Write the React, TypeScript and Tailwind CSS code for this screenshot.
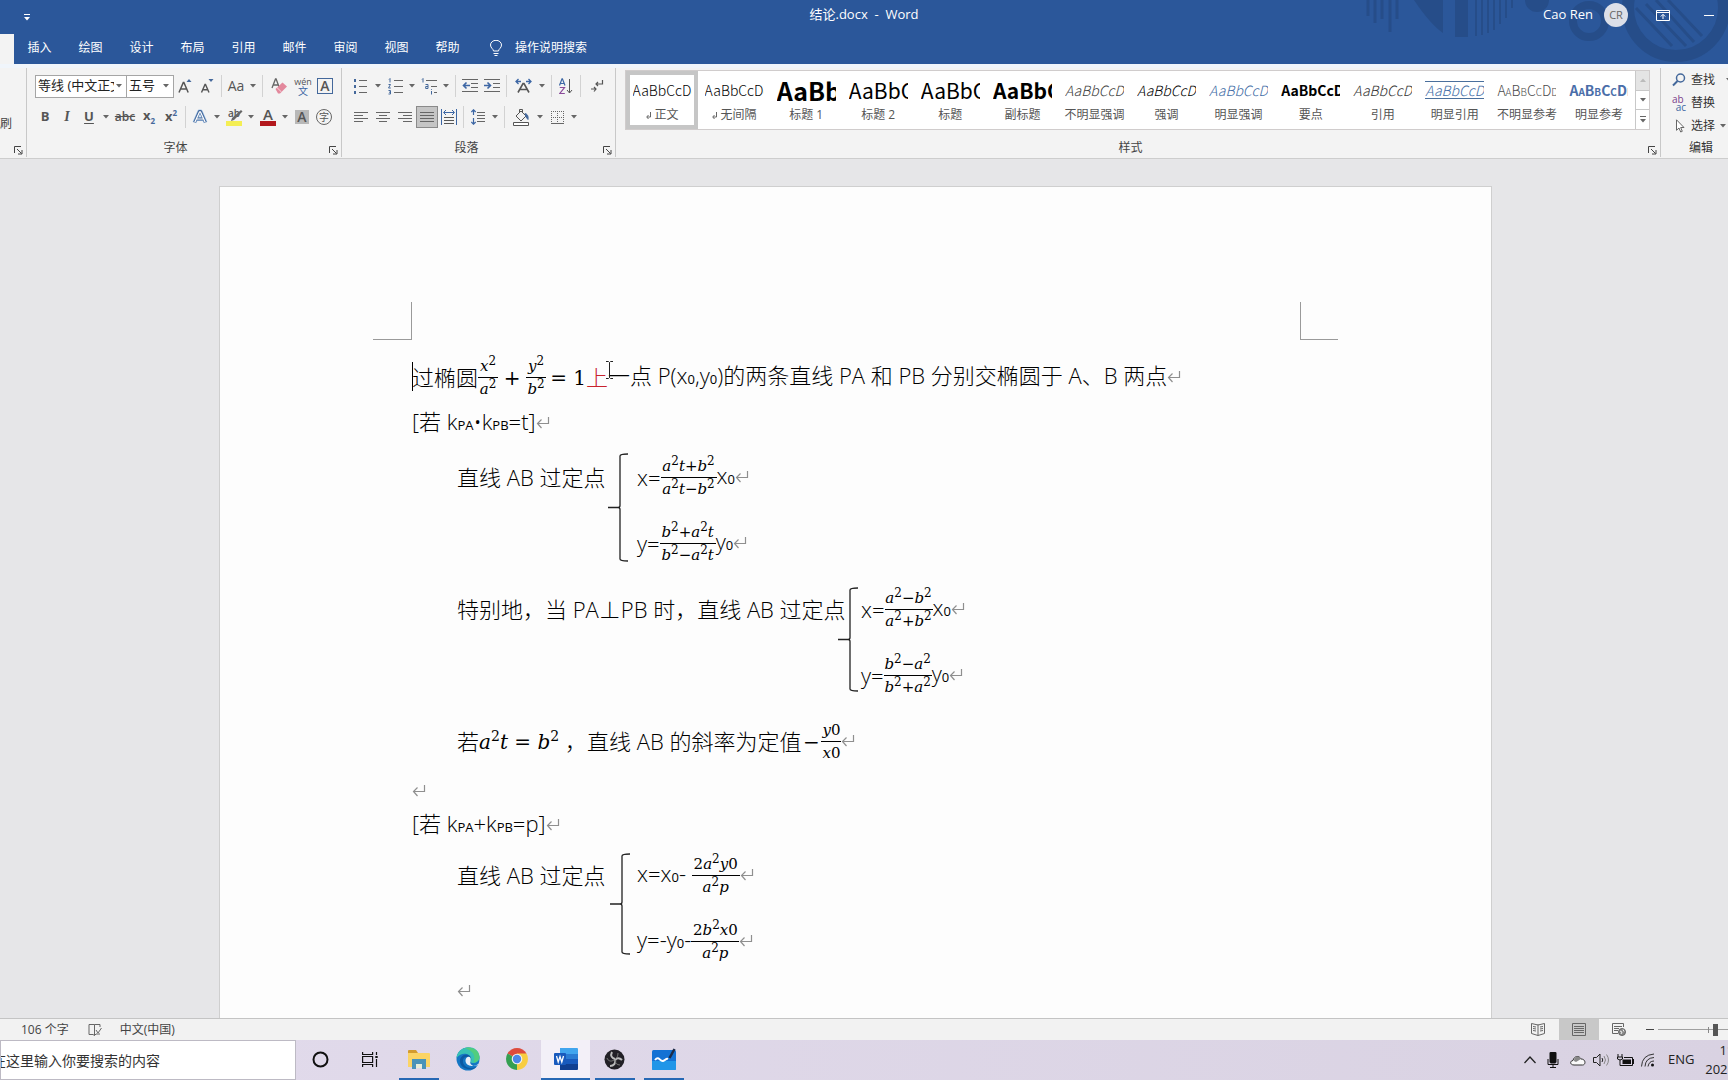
import type { ReactNode } from "react";

const TABS = ["插入", "绘图", "设计", "布局", "引用", "邮件", "审阅", "视图", "帮助"];

const STYLES = [
  { name: "正文", mark: true, cls: "text-sm font-light text-black" },
  { name: "无间隔", mark: true, cls: "text-sm font-light text-black" },
  { name: "标题 1", cls: "text-[25px] font-bold text-black" },
  { name: "标题 2", cls: "text-[21px] text-black" },
  { name: "标题", cls: "text-[21px] text-black" },
  { name: "副标题", cls: "text-[21px] font-bold text-black" },
  { name: "不明显强调", cls: "text-sm font-light italic text-[#404040]" },
  { name: "强调", cls: "text-sm font-light italic text-black" },
  { name: "明显强调", cls: "text-sm font-light italic text-[#3f6da6]" },
  { name: "要点", cls: "text-sm font-bold text-black" },
  { name: "引用", cls: "text-sm font-light italic text-[#333]" },
  { name: "明显引用", cls: "text-sm font-light italic text-[#3f6da6] border-y border-[#4a6f9c]" },
  { name: "不明显参考", cls: "text-sm font-light [font-variant:small-caps] text-[#4a4a4a]" },
  { name: "明显参考", cls: "text-sm font-bold [font-variant:small-caps] text-[#4a6ea9]" },
];

// ================================
// RIBBON PARTS
// ================================
function Tool({ label, active, wide, children }: { label: string; active?: boolean; wide?: boolean; children: ReactNode }) {
  return (
    <button
      aria-label={label}
      className={`flex h-[22px] shrink-0 items-center justify-center text-[#555] ${wide ? "w-[26px]" : "w-[22px]"} ${
        active ? "border border-[#8a8a8a] bg-[#c5c5c5]" : ""
      }`}
    >
      {children}
    </button>
  );
}

function Arrow({ label = "更多" }: { label?: string }) {
  return (
    <button aria-label={label} className="flex h-[22px] w-3 shrink-0 items-center justify-center">
      <Caret />
    </button>
  );
}

function Caret({ color = "#666" }: { color?: string }) {
  return (
    <svg width="6" height="4" viewBox="0 0 6 4" aria-hidden="true">
      <path d="M0 0h6L3 3.6z" fill={color} />
    </svg>
  );
}

function Sep() {
  return <div className="mx-[3px] h-[22px] w-px shrink-0 bg-[#d2d2d2]" />;
}

function Launcher({ label }: { label: string }) {
  return (
    <button aria-label={label} className="flex h-4 w-4 shrink-0 items-center justify-center pt-1">
      <svg width="9" height="9" viewBox="0 0 9 9" fill="none" stroke="#444">
        <path d="M.5 7V.5H7M3 3l4.5 4.5M8 4v4H4" />
      </svg>
    </button>
  );
}

function GroupLabel({ text }: { text: string }) {
  return (
    <div className="mt-auto flex h-[18px] items-center">
      <span className="flex-1 pr-2 text-center">{text}</span>
      <Launcher label={`${text}设置`} />
    </div>
  );
}

function Combo({ label, value, cls }: { label: string; value: string; cls: string }) {
  return (
    <div className={`relative h-[23px] shrink-0 border border-[#a5a5a5] bg-white ${cls}`}>
      <select aria-label={label} className="h-full w-full appearance-none overflow-hidden bg-transparent pr-3 pl-[2px] text-[13px] text-[#222]">
        <option>{value}</option>
      </select>
      <span className="pointer-events-none absolute top-0 right-1 flex h-full items-center">
        <Caret />
      </span>
    </div>
  );
}

function Lines({ d }: { d: string }) {
  return (
    <svg width="14" height="14" viewBox="0 0 14 14" stroke="#666" fill="none">
      <path d={d} />
    </svg>
  );
}

function FontGroup() {
  return (
    <div className="flex w-[315px] shrink-0 flex-col border-r border-[#c8c8c8] pt-[7px] pl-[7px]">
      <div className="flex h-[22px] items-center pl-px">
        <Combo label="字体" value="等线 (中文正文)" cls="w-[92px]" />
        <Combo label="字号" value="五号" cls="-ml-px w-[48px]" />
        <Tool label="增大字号">
          <svg width="16" height="16" viewBox="0 0 16 16" fill="none">
            <path d="M2 14.500 6.300 4.500h.6L11.200 14.500M3.600 11h6" stroke="#555" strokeWidth="1.500" />
            <path d="M9.500 4 12 1l2.500 3z" fill="#44689b" />
          </svg>
        </Tool>
        <Tool label="减小字号">
          <svg width="16" height="16" viewBox="0 0 16 16" fill="none">
            <path d="M2.500 14.500 6 6.500h.5L10 14.500M3.800 11.800h5" stroke="#555" strokeWidth="1.400" />
            <path d="M9.500 1h5L12 4z" fill="#44689b" />
          </svg>
        </Tool>
        <Sep />
        <Tool label="更改大小写">
          <span className="text-sm">Aa</span>
        </Tool>
        <Arrow />
        <Sep />
        <Tool label="清除所有格式" wide>
          <svg width="18" height="18" viewBox="0 0 18 18" fill="none">
            <path d="M2 11 5.500 2h.6l3 8M3.400 8h5" stroke="#666" strokeWidth="1.300" />
            <path d="m5.500 12 7-6.500 4.500 4-7 7H8z" fill="#e3889c" />
            <path d="m7 10.600 4.500 4.400" stroke="#f6dbe1" />
          </svg>
        </Tool>
        <Tool label="拼音指南">
          <span className="flex flex-col items-center leading-none">
            <span className="text-[9px] leading-[9px]">wén</span>
            <span className="text-[10px] leading-[10px] text-[#3c66a4]">文</span>
          </span>
        </Tool>
        <Tool label="字符边框">
          <span className="flex h-4 w-4 items-center justify-center border border-[#44689b] text-[14px] leading-none font-semibold">A</span>
        </Tool>
      </div>
      <div className="mt-[9px] flex h-[22px] items-center">
        <Tool label="加粗"><b className="text-[13px]">B</b></Tool>
        <Tool label="倾斜"><i className="font-['Liberation_Serif',serif] text-sm font-bold">I</i></Tool>
        <Tool label="下划线"><span className="text-[13px] font-bold underline underline-offset-2">U</span></Tool>
        <Arrow />
        <Tool label="删除线" wide><span className="text-xs font-semibold line-through">abc</span></Tool>
        <Tool label="下标"><span className="text-[13px] font-bold">x<span className="align-sub text-[8px] text-[#44689b]">2</span></span></Tool>
        <Tool label="上标"><span className="text-[13px] font-bold">x<span className="align-super text-[8px] text-[#44689b]">2</span></span></Tool>
        <Sep />
        <Tool label="文本效果">
          <svg width="16" height="16" viewBox="0 0 16 16" fill="none" strokeLinejoin="round">
            <path d="M2.500 13.500 7.300 2.500h1.400l4.800 11M4.500 10h7" stroke="#a9c8ea" strokeWidth="4" />
            <path d="M2.500 13.500 7.300 2.500h1.400l4.800 11M4.500 10h7" stroke="#44689b" strokeWidth="2.800" />
            <path d="M2.700 13.500 7.600 2.800h.8l4.900 10.700M4.500 10h7" stroke="#fff" strokeWidth="1.200" />
          </svg>
        </Tool>
        <Arrow />
        <Tool label="突出显示">
          <span className="relative flex h-[18px] w-4 flex-col">
            <span className="text-[10px] leading-[10px] font-semibold">ab</span>
            <svg className="absolute top-0 left-0" width="17" height="13" viewBox="0 0 17 13">
              <path d="m15 2 1.500 1.500L8 12l-3 1 1-3z" fill="#666" />
            </svg>
            <span className="mt-auto h-[5px] w-full bg-[#f4ee54]" />
          </span>
        </Tool>
        <Arrow />
        <Tool label="字体颜色">
          <span className="flex h-[18px] w-4 flex-col items-center">
            <span className="text-[15px] leading-[13px] font-semibold">A</span>
            <span className="mt-auto h-[5px] w-full bg-[#b3181d]" />
          </span>
        </Tool>
        <Arrow />
        <Tool label="字符底纹">
          <span className="flex h-[14px] w-[14px] items-center justify-center bg-[#b8b8b8] text-sm leading-none font-semibold">A</span>
        </Tool>
        <Tool label="带圈字符">
          <span className="flex h-4 w-4 items-center justify-center rounded-full border border-[#666] text-[10px] leading-none">字</span>
        </Tool>
      </div>
      <GroupLabel text="字体" />
    </div>
  );
}

function ParagraphGroup() {
  return (
    <div className="flex w-[274px] shrink-0 flex-col border-r border-[#c8c8c8] pt-[7px]">
      <div className="flex h-[22px] items-center pl-2">
        <Tool label="项目符号">
          <svg width="14" height="16" viewBox="0 0 14 16">
            <path d="M0 1h2v3H0zM0 7h2v3H0zM0 13h2v3H0z" fill="#44689b" />
            <path d="M5 2.500h8M5 8.500h8M5 14.500h8" stroke="#666" />
          </svg>
        </Tool>
        <Arrow />
        <Tool label="编号">
          <svg width="15" height="17" viewBox="0 0 15 17" fill="none">
            <path d="M1 1.500 2 .5v4M.5 6.500h2L.5 10h2.300M.5 12.500h2v3.500h-2M1 14.200h1.500" stroke="#44689b" />
            <path d="M6 2.500h9M6 8.500h9M6 14.500h9" stroke="#666" />
          </svg>
        </Tool>
        <Arrow />
        <Tool label="多级列表">
          <svg width="17" height="17" viewBox="0 0 17 17" fill="none">
            <path d="M1 1.500 2 .5v4M4.500 6.500h2.500v4h-2.300v-2H7M10.500 11v.8M10.500 13v3.500" stroke="#44689b" />
            <path d="M5 2.500h11M10 8.500h6M13 14.500h3" stroke="#666" />
          </svg>
        </Tool>
        <Arrow />
        <Sep />
        <Tool label="减少缩进">
          <svg width="16" height="14" viewBox="0 0 16 14" fill="none">
            <path d="M0 .5h16M9 4.500h7M9 8.500h7M0 12.500h16" stroke="#666" />
            <path d="M8 6.500H2M4.500 3.500l-3 3 3 3" stroke="#3c66a4" strokeWidth="1.600" />
          </svg>
        </Tool>
        <Tool label="增加缩进">
          <svg width="16" height="14" viewBox="0 0 16 14" fill="none">
            <path d="M0 .5h16M9 4.500h7M9 8.500h7M0 12.500h16" stroke="#666" />
            <path d="M0 6.500h6M3.500 3.500l3 3-3 3" stroke="#3c66a4" strokeWidth="1.600" />
          </svg>
        </Tool>
        <Sep />
        <Tool label="中文版式" wide>
          <svg width="17" height="16" viewBox="0 0 17 16" fill="none">
            <path d="m3 14.500 5-9h1l5 9M5 11.500h7" stroke="#555" strokeWidth="1.600" />
            <path d="M1 3.500h5M3.500 1 1 3.500 3.500 6M16 3.500h-5M13.500 1 16 3.500 13.500 6" stroke="#3c66a4" strokeWidth="1.300" />
          </svg>
        </Tool>
        <Arrow />
        <Sep />
        <Tool label="排序">
          <svg width="14" height="17" viewBox="0 0 14 17" fill="none">
            <path d="M.5 7.500 3 .8h.4L6 7.500M1.500 5.500h3.500" stroke="#3c66a4" strokeWidth="1.200" />
            <path d="M.8 9.500h4.700L.8 15.500h5" stroke="#8a4a9a" strokeWidth="1.200" />
            <path d="M10.500 1v14M8 12l2.500 3 2.500-3" stroke="#555" />
          </svg>
        </Tool>
        <Sep />
        <Tool label="显示编辑标记" wide>
          <svg width="13" height="13" viewBox="0 0 13 13" fill="none" stroke="#555" strokeWidth="1.200">
            <path d="M11.500 0v4H5M7 2 5 4l2 2M0 9h5M3 7l2 2-2 2.500" />
          </svg>
        </Tool>
      </div>
      <div className="mt-[9px] flex h-[22px] items-center pl-2">
        <Tool label="左对齐"><Lines d="M0 2.500h14M0 5.500h9M0 8.500h14M0 11.500h9" /></Tool>
        <Tool label="居中"><Lines d="M0 2.500h14M3 5.500h8M0 8.500h14M3 11.500h8" /></Tool>
        <Tool label="右对齐"><Lines d="M0 2.500h14M5 5.500h9M0 8.500h14M5 11.500h9" /></Tool>
        <Tool label="两端对齐" active><Lines d="M0 2.500h14M0 5.500h14M0 8.500h14M0 11.500h14" /></Tool>
        <Tool label="分散对齐">
          <svg width="16" height="16" viewBox="0 0 16 16" fill="none">
            <path d="M.5 0v16M15.500 0v16M3 3.500h10M5 1 2.500 3.500 5 6M11 1l2.500 2.500L11 6" stroke="#3c66a4" />
            <path d="M3 8.500h10M3 11.500h10M3 14.500h10" stroke="#555" />
          </svg>
        </Tool>
        <Sep />
        <Tool label="行距">
          <svg width="14" height="16" viewBox="0 0 14 16" fill="none">
            <path d="M2.500 1v5M.3 3 2.500.8 4.700 3M2.500 9v6M.3 13l2.200 2.200L4.700 13" stroke="#3c66a4" strokeWidth="1.200" />
            <path d="M6 3.500h8M6 6.500h8M6 9.500h8M6 12.500h8" stroke="#666" />
          </svg>
        </Tool>
        <Arrow />
        <Sep />
        <Tool label="底纹" wide>
          <svg width="17" height="17" viewBox="0 0 17 17" fill="none" stroke="#555">
            <path d="m3 7 5-5 5 5-5 5zM6.500 3.500V.5h3V4" />
            <path d="M12 4.500c2 .5 3.500 2 3 6l-2-2.500z" fill="#44689b" stroke="#44689b" />
            <path d="M.5 13.500h15v3H.5z" fill="#fff" />
          </svg>
        </Tool>
        <Arrow />
        <Tool label="边框">
          <svg width="13" height="13" viewBox="0 0 13 13" fill="none" stroke="#666">
            <path d="M0 .5h13M0 6.500h13M.5 0v13M6.500 0v13M12.500 0v13" strokeDasharray="1 1" />
            <path d="M0 12.500h13" />
          </svg>
        </Tool>
        <Arrow />
      </div>
      <GroupLabel text="段落" />
    </div>
  );
}

function StylesGroup() {
  return (
    <div className="flex min-w-0 flex-1 flex-col border-r border-[#c8c8c8] pt-[2px] pl-[9px]">
      <div className="mr-[10px] flex h-[60px] border border-[#d0cccc] bg-white">
        <div className="grid min-w-0 flex-1 grid-cols-14">
          {STYLES.map((s, i) => (
            <button
              key={s.name}
              className={`flex min-w-0 flex-col items-center ${i === 0 ? "outline-4 -outline-offset-4 outline-[#c6c6c6]" : ""}`}
            >
              <span className="flex h-[34px] w-[59px] items-center overflow-hidden pt-1">
                <span className={`font-['Noto_Sans_CJK_SC',sans-serif] leading-[16px] ${s.cls}`}>AaBbCcDd</span>
              </span>
              <span className="flex items-center gap-1 leading-5 whitespace-nowrap text-[#555]">
                {s.mark && (
                  <svg width="5" height="7" viewBox="0 0 5 7" fill="none" stroke="#666">
                    <path d="M4.500 0v5H1M2.500 3 .7 5l1.800 2" />
                  </svg>
                )}
                {s.name}
              </span>
            </button>
          ))}
        </div>
        <div className="flex w-[14px] shrink-0 flex-col border-l border-[#c8c8c8]">
          <button aria-label="上一行" className="flex flex-1 items-center justify-center bg-[#e4e4e4]">
            <svg width="6" height="4" viewBox="0 0 6 4"><path d="M0 4h6L3 .4z" fill="#bbb" /></svg>
          </button>
          <button aria-label="下一行" className="flex flex-1 items-center justify-center border-y border-[#c8c8c8]"><Caret /></button>
          <button aria-label="其他样式" className="flex flex-1 flex-col items-center justify-center gap-[2px]">
            <span className="h-px w-[6px] bg-[#666]" />
            <Caret />
          </button>
        </div>
      </div>
      <GroupLabel text="样式" />
    </div>
  );
}

function EditingGroup() {
  return (
    <div className="flex w-[67px] shrink-0 flex-col overflow-hidden pl-[11px] text-[#333]">
      <button className="flex h-[23px] items-center gap-[5px] whitespace-nowrap">
        <svg width="14" height="14" viewBox="0 0 14 14" fill="none" stroke="#44689b" strokeWidth="1.500" className="shrink-0">
          <circle cx="8.500" cy="5" r="4" />
          <path d="M5.500 8 1 12.500" strokeWidth="2" />
        </svg>
        查找
        <span className="ml-[6px] shrink-0"><Caret /></span>
      </button>
      <button className="flex h-[23px] items-center gap-[5px] whitespace-nowrap">
        <span className="flex w-[14px] shrink-0 flex-col text-[10px] leading-[8px]">
          <span className="text-left text-[#7b3f8c]">ab</span>
          <span className="text-right text-[#3c66a4]">ac</span>
        </span>
        替换
      </button>
      <button className="flex h-[23px] items-center gap-[5px] pt-px whitespace-nowrap">
        <svg width="14" height="14" viewBox="0 0 14 14" fill="#fff" stroke="#666" className="shrink-0">
          <path d="M4.500.8v10.500L7 9l1.700 4 1.600-.7L8.700 8.500H12z" />
        </svg>
        选择
        <Caret />
      </button>
      <div className="mt-auto h-[18px] pl-[17px] leading-[18px]">编辑</div>
    </div>
  );
}

// ================================
// TITLE BAR
// ================================
function TitleArt() {
  return (
    <svg className="absolute top-0 right-0" width="378" height="64" viewBox="0 0 378 64" fill="none" stroke="#264d89" aria-hidden="true">
      <path d="M18 0v16M25 0v23M32 0v19M40 0v32M47 0v19" strokeWidth="3" />
      <path d="M64 0h29v33Q80 24 64 0zM105 0h13v37h-13z" fill="#264d89" stroke="none" />
      <path d="M126 0v36M132 0v35M138 0v33M144 0v30M150 0v24M156 0v18M162 0v8" strokeWidth="2" />
      <circle cx="187" cy="0" r="12" fill="#264d89" stroke="none" />
      <circle cx="239" cy="21" r="16" strokeWidth="8" />
      <circle cx="326" cy="8" r="48" strokeWidth="12" />
      <path d="m286 8 36 38M296 4l40 42M306 0l38 42M318 0l34 36" strokeWidth="3" />
    </svg>
  );
}

function TitleBar() {
  return (
    <header className="relative h-16 shrink-0 bg-[#2b579a] text-white">
      <TitleArt />
      <div className="relative grid h-[30px] grid-cols-3 items-center">
        <button aria-label="自定义快速访问工具栏" className="ml-[23px] flex w-2 flex-col items-center gap-[2px] pt-1">
          <span className="h-px w-[6px] bg-white" />
          <Caret color="#fff" />
        </button>
        <div className="text-center text-[13px] whitespace-pre">结论.docx  -  Word</div>
        <div className="flex items-center justify-end pr-[14px]">
          <span className="text-[13px]">Cao Ren</span>
          <span className="ml-[11px] flex h-6 w-6 items-center justify-center rounded-full bg-[#dcdfe8] text-[11px] text-[#666]">CR</span>
          <button aria-label="功能区显示选项" className="ml-7">
            <svg width="14" height="11" viewBox="0 0 14 11" fill="none" stroke="#fff">
              <path d="M.5.5h13v10H.5zM.5 2.500h13M7 9V4.500M4.800 6.500 7 4.300l2.200 2.200" />
            </svg>
          </button>
          <button aria-label="最小化" className="ml-[34px] flex h-6 w-[10px] items-center">
            <span className="h-px w-full bg-white" />
          </button>
        </div>
      </div>
      <nav className="relative flex h-[34px] items-end text-xs">
        <div className="h-[30px] w-[14px] bg-[#f3f3f3]" />
        {TABS.map((t) => (
          <button key={t} className="h-[34px] w-[51px] pt-[2px] text-center">{t}</button>
        ))}
        <button className="flex h-[34px] items-center gap-[13px] pt-[2px] pl-[17px]">
          <svg width="12" height="16" viewBox="0 0 12 16" fill="none" stroke="#fff">
            <path d="M3.500 11c0-2-3-3-3-6a5.500 4.700 0 0 1 11 0c0 3-3 4-3 6zM3.500 13.500h5M4.500 15.500h3" />
          </svg>
          操作说明搜索
        </button>
      </nav>
    </header>
  );
}

// ================================
// DOCUMENT PARTS
// ================================
// letters are set in italics, "^n" is raised, the rest stays upright
function MathText({ t, big }: { t: string; big?: boolean }) {
  const parts = t.match(/\^\d|[a-z]|[^a-z^]+/g) || [];
  return (
    <span className={`font-['DejaVu_Serif',serif] font-normal whitespace-pre ${big ? "text-[20px]" : "text-[15px]"}`}>
      {parts.map((p, i) => {
        if (p[0] === "^")
          return <sup key={i} className={`top-0 leading-none ${big ? "align-[8px] text-[14px]" : "align-[6px] text-[12px]"}`}>{p[1]}</sup>;
        return /[a-z]/.test(p) ? <i key={i}>{p}</i> : <span key={i}>{p}</span>;
      })}
    </span>
  );
}

function Frac({ top, bottom, w }: { top: string; bottom: string; w: string }) {
  return (
    <span className={`flex shrink-0 flex-col items-center ${w}`}>
      <span className="flex h-[23px] items-end leading-[22px]"><MathText t={top} /></span>
      <span className="h-px w-full bg-black" />
      <span className="flex h-[23px] items-start leading-[23px]"><MathText t={bottom} /></span>
    </span>
  );
}

function Small({ children }: { children: ReactNode }) {
  return <span className="text-[13px] font-normal">{children}</span>;
}

function Enter() {
  return (
    <svg className="shrink-0" width="14" height="12" viewBox="0 0 14 12" fill="none" stroke="#8f8f8f" strokeWidth="1.200">
      <path d="M12.500 0v6.500H1.500M5.500 2.500l-4 4 4 4.500" />
    </svg>
  );
}

function Brace({ cls, h }: { cls: string; h: number }) {
  return (
    <svg className={`absolute ${cls}`} width="20" height={h} viewBox={`0 0 20 ${h}`} fill="none" stroke="#222" strokeWidth="1.300">
      <path d={`M20 1q-8 0-8 2v${h / 2 - 5}q0 2-2 2H0h10q2 0 2 2V${h - 3}q0 2 8 2`} />
    </svg>
  );
}

function Row({ tall, children }: { tall?: boolean; children: ReactNode }) {
  return <div className={`flex items-center leading-8 whitespace-pre ${tall ? "h-[66px]" : "h-[34px]"}`}>{children}</div>;
}

function System({ label, w, brace, children }: { label: string; w: string; brace: ReactNode; children: ReactNode }) {
  return (
    <div className="flex pl-[45px]">
      <div className={`relative shrink-0 ${w}`}>
        <Row tall>{label}</Row>
        {brace}
      </div>
      <div>{children}</div>
    </div>
  );
}

function Page() {
  return (
    <article className="mx-auto min-h-[900px] max-w-[1273px] border border-[#cfcfcf] bg-[#fdfdfd] pt-[115px] text-[22px] text-black">
      <div className="flex h-[38px] justify-between px-[153px]">
        <div className="w-[39px] border-r border-b border-[#9a9a9a]" />
        <div className="w-[38px] border-b border-l border-[#9a9a9a]" />
      </div>
      <div className="pl-[192px]">
        <div className="relative flex h-[66px] items-center pt-2 leading-8 whitespace-pre">
          <span className="absolute top-[22px] left-0 h-[29px] w-px bg-black" />
          <span>过椭圆</span>
          <Frac top="x^2" bottom="a^2" w="w-5" />
          <span className="w-7 text-center"><MathText t="+" big /></span>
          <Frac top="y^2" bottom="b^2" w="w-5" />
          <span className="w-10 text-right"><MathText t="= 1" big /></span>
          <span className="text-[#c8222c]">上</span>
          <span>一点 P(x<Small>0</Small>,y<Small>0</Small>)的两条直线 PA 和 PB 分别交椭圆于 A、B 两点</span>
          <Enter />
          <svg className="absolute top-[21px] left-[193px]" width="9" height="18" viewBox="0 0 9 18" fill="none" stroke="#222">
            <path d="M1 .5h2.500l1 1 1-1H8M4.500 1.500v15M1 17.500h2.500l1-1 1 1H8" />
          </svg>
        </div>
        <Row>
          <span>[若 k<Small>PA</Small>•k<Small>PB</Small>=t]</span>
          <Enter />
        </Row>
        <div className="h-1" />
        <System label="直线 AB 过定点" w="w-[180px]" brace={<Brace cls="top-[9px] right-[9px]" h={109} />}>
          <Row tall><span>x=</span><Frac top="a^2t+b^2" bottom="a^2t−b^2" w="w-14" /><span>x<Small>0</Small></span><Enter /></Row>
          <Row tall><span>y=</span><Frac top="b^2+a^2t" bottom="b^2−a^2t" w="w-14" /><span>y<Small>0</Small></span><Enter /></Row>
        </System>
        <System label="特别地，当 PA⊥PB 时，直线 AB 过定点" w="w-[404px]" brace={<Brace cls="top-[11px] right-[3px]" h={105} />}>
          <Row tall><span>x=</span><Frac top="a^2−b^2" bottom="a^2+b^2" w="w-12" /><span>x<Small>0</Small></span><Enter /></Row>
          <Row tall><span>y=</span><Frac top="b^2−a^2" bottom="b^2+a^2" w="w-12" /><span>y<Small>0</Small></span><Enter /></Row>
        </System>
        <div className="pl-[45px]">
          <Row tall>
            <span>若</span>
            <span className="w-[86px]"><MathText t="a^2t = b^2" big /></span>
            <span>，直线 AB 的斜率为定值</span>
            <span className="w-5 text-center"><MathText t="−" big /></span>
            <Frac top="y0" bottom="x0" w="w-5" />
            <Enter />
          </Row>
        </div>
        <Row><Enter /></Row>
        <Row>
          <span>[若 k<Small>PA</Small>+k<Small>PB</Small>=p]</span>
          <Enter />
        </Row>
        <System label="直线 AB 过定点" w="w-[180px]" brace={<Brace cls="top-[11px] right-[7px]" h={102} />}>
          <Row tall><span>x=x<Small>0</Small>- </span><Frac top="2a^2y0" bottom="a^2p" w="w-12" /><Enter /></Row>
          <Row tall><span>y=-y<Small>0</Small>-</span><Frac top="2b^2x0" bottom="a^2p" w="w-12" /><Enter /></Row>
        </System>
        <div className="pl-[45px]"><Row><Enter /></Row></div>
      </div>
    </article>
  );
}

// ================================
// BOTTOM BARS
// ================================
function StatusBar() {
  return (
    <footer className="flex h-[22px] shrink-0 items-center border-t border-[#c4c4c4] bg-[#f2f2f2] text-xs text-[#444]">
      <span className="pl-[21px]">106 个字</span>
      <button aria-label="校对" className="ml-[19px]">
        <svg width="14" height="13" viewBox="0 0 14 13" fill="none" stroke="#666">
          <path d="M6.500 12.500v-11H1v10h4zM6.500 1.500H12V4M8 7l2 3 3.500-5M6.500 12.500 8 11h4" />
        </svg>
      </button>
      <span className="ml-[18px]">中文(中国)</span>
      <div className="ml-auto flex h-full items-center">
        <button aria-label="阅读视图" className="mr-[14px]">
          <svg width="14" height="13" viewBox="0 0 14 13" fill="none" stroke="#666">
            <path d="M7 1.500v11M.5.500 7 2l6.500-1.500v10L7 12.500.5 10.500zM2 3.500l3 .5M2 5.500l3 .5M2 7.500l3 .5M12 3.500 9 4M12 5.500 9 6M12 7.500 9 8" />
          </svg>
        </button>
        <button aria-label="页面视图" className="flex h-full w-10 items-center justify-center bg-[#c8c8c8]">
          <svg width="14" height="13" viewBox="0 0 14 13" fill="none" stroke="#666">
            <path d="M.5.5h13v12H.5zM2 3.500h10M2 5.500h10M2 7.500h10M2 9.500h10" />
          </svg>
        </button>
        <button aria-label="Web 版式视图" className="ml-[13px]">
          <svg width="14" height="13" viewBox="0 0 14 13" fill="none" stroke="#666">
            <path d="M11.500 4V.5H.5v10H6M2 3.500h8M2 5.500h5M2 7.500h4" />
            <circle cx="10" cy="9" r="3.500" fill="#888" />
            <path d="m8 8 2 1-1 2M11 6.500l1 2" stroke="#eee" />
          </svg>
        </button>
        <button aria-label="缩小" className="ml-5 flex h-full w-2 items-center"><span className="h-px w-full bg-[#444]" /></button>
        <div className="relative ml-1 flex h-full w-[70px] items-center overflow-hidden">
          <input type="range" aria-label="缩放" defaultValue={78} className="absolute inset-0 w-full opacity-0" />
          <span className="h-px w-full bg-[#a0a0a0]" />
          <span className="absolute top-[8px] left-[50px] h-[6px] w-px bg-[#888]" />
          <span className="absolute top-[5px] left-[55px] h-3 w-[5px] bg-[#555]" />
        </div>
      </div>
    </footer>
  );
}

function TaskIcon({ label, state, children }: { label: string; state?: "open" | "active"; children: ReactNode }) {
  return (
    <button aria-label={label} className={`flex h-10 w-[49px] flex-col items-center ${state === "active" ? "bg-[#f3f0f8]" : ""}`}>
      <span className="flex flex-1 items-center">{children}</span>
      <span className={`h-[2px] ${state === "active" ? "w-full bg-[#2668b4]" : state === "open" ? "w-10 bg-[#2668b4]" : "w-0"}`} />
    </button>
  );
}

function TaskBar() {
  return (
    <div className="flex h-10 shrink-0 items-center overflow-hidden bg-linear-to-r from-[#e2dbec] to-[#d9d2e2] text-[#222]">
      <div className="h-10 w-[296px] shrink-0 overflow-hidden border border-[#bdbac4] bg-white">
        <input aria-label="搜索" placeholder="在这里输入你要搜索的内容" className="-ml-[9px] h-full w-full text-sm outline-none placeholder:text-[#333]" />
      </div>
      <div className="flex">
        <TaskIcon label="Cortana">
          <svg width="17" height="17" viewBox="0 0 17 17" fill="none" stroke="#111" strokeWidth="2"><circle cx="8.500" cy="8.500" r="7" /></svg>
        </TaskIcon>
        <TaskIcon label="任务视图">
          <svg width="16" height="15" viewBox="0 0 16 15" fill="none" stroke="#111" strokeWidth="1.200">
            <path d="M.6 0v2.500h10V0M.6 4.500h10v6H.6zM.6 15v-2.500h10V15M14.500 0v3M14.500 7v8" />
            <path d="M13.300 4h2.400v2h-2.400z" fill="#111" stroke="none" />
          </svg>
        </TaskIcon>
        <TaskIcon label="文件资源管理器" state="open">
          <svg width="22" height="20" viewBox="0 0 22 20">
            <path d="M0 2q0-1 1-1h7l2 3h-10z" fill="#d39c2e" />
            <path d="M0 4h21q1 0 1 1v13H0z" fill="#fbd465" />
            <path d="M4 10h14v10h-4v-5H8v5H4z" fill="#4a93b8" />
            <path d="M8 15h6v4H8z" fill="#e8edd8" />
          </svg>
        </TaskIcon>
        <TaskIcon label="Microsoft Edge">
          <svg width="24" height="24" viewBox="0 0 24 24">
            <circle cx="12" cy="12" r="11.500" fill="#1577c4" />
            <path d="M.5 11C2-3 23-3 23.500 10c0 4-3 6-7 6-2 0-3-1-2-2.500C17 8 7 3 .5 11z" fill="#38c1b5" />
            <path d="M12 .5C20 .5 23.500 6 23.500 10c0 3-3 5.500-6 5.800C20 8 17 4 9 1z" fill="#58cf71" opacity=".8" />
            <path d="M15 14c1-5-7-6-8-1-1 6 6 10 13 7-3 4-15 3-16-5-1-6 8-11 11-4 .5 2 0 2 0 3z" fill="#0c5aa3" />
            <path d="M14.500 14c1.500-6-5-5-5-.5 0 5 6 7 12 4 .5-.5 1 0 .5.500-4 2-9 0-7.500-4z" fill="#e9eff8" />
          </svg>
        </TaskIcon>
        <TaskIcon label="Google Chrome">
          <svg width="22" height="22" viewBox="0 0 22 22">
            <path d="M11 11 1.500 5.500A11 11 0 0 1 20.500 5.500z" fill="#dd4b3c" />
            <path d="M11 11 1.500 5.500A11 11 0 0 0 11 22l5-8.500z" fill="#35a052" />
            <path d="M11 11v11A11 11 0 0 0 20.500 5.500H11z" fill="#f8cd41" />
            <circle cx="11" cy="11" r="5.300" fill="#f2f2f2" />
            <circle cx="11" cy="11" r="4.200" fill="#4b87e8" />
          </svg>
        </TaskIcon>
        <TaskIcon label="Word" state="active">
          <svg width="24" height="22" viewBox="0 0 24 22">
            <path d="M6 0h17q1 0 1 1v5H6z" fill="#41a5ee" />
            <path d="M6 6h18v5H6z" fill="#2b7cd3" />
            <path d="M6 11h18v5H6z" fill="#185abd" />
            <path d="M6 16h18v5q0 1-1 1H6z" fill="#103f91" />
            <rect y="5" width="12" height="12" rx="1" fill="#185abd" />
            <path d="m2.500 8 1.700 6L6 8.500 7.800 14l1.700-6" fill="none" stroke="#fff" strokeWidth="1.300" />
          </svg>
        </TaskIcon>
        <TaskIcon label="OBS" state="open">
          <svg width="21" height="21" viewBox="0 0 21 21" fill="none">
            <circle cx="10.500" cy="10.500" r="10" fill="#222026" />
            <path d="M8 3c-2 4 0 6 3 7M18 11c-3-3-6-2-7 .5M6 17c4 0 6-3 5-6" stroke="#bbb" strokeWidth="2" />
            <path d="M3 9c1 3 4 4 7 2M14 4c0 3-1 5-3 6M16 16c-3 0-5-2-5-5" stroke="#777" />
          </svg>
        </TaskIcon>
        <TaskIcon label="Whiteboard" state="open">
          <svg width="24" height="23" viewBox="0 0 24 23" fill="none">
            <rect y="2" width="24" height="20" rx="1.500" fill="#1472d4" />
            <path d="M0 13h24v7.500q0 1.500-1.500 1.500h-21Q0 22 0 20.500z" fill="#2196e8" />
            <path d="M3 12c4-5 5 2 8 1s3-3 5-2" stroke="#fff" strokeWidth="2" />
            <path d="m22.500 1-5 9" stroke="#1d2c48" strokeWidth="2.500" />
          </svg>
        </TaskIcon>
      </div>
      <div className="ml-auto flex h-full w-[204px] shrink-0 items-center">
        <div className="flex w-[144px] shrink-0 items-center gap-[7px]">
          <svg width="12" height="8" viewBox="0 0 12 8" fill="none" stroke="#222" strokeWidth="1.300"><path d="m.5 7 5.500-6 5.500 6" /></svg>
          <svg className="ml-1" width="12" height="16" viewBox="0 0 12 16" fill="none" stroke="#111">
            <rect x="3" y="0" width="6" height="11" rx="1" fill="#111" />
            <path d="M1 7v5.500h10V7M6 12v3.500M3 15.500h6" />
          </svg>
          <svg className="ml-1" width="16" height="11" viewBox="0 0 16 11" stroke="#333">
            <path d="M4 10C0 10-.5 6 3 5.500 4 1 9 0 11 4c5 0 5 6 1.500 6z" fill="#fafafa" />
            <path d="M4 6C4 1 9 0 11 4L6 7z" fill="#888" stroke="none" />
          </svg>
          <svg width="17" height="14" viewBox="0 0 17 14" fill="none" stroke="#222">
            <path d="M.5 4.500h3L7 1v12L3.500 9.500h-3zM9 5q1.500 2 0 4" />
            <path d="M11 3q3 4 0 8M13.500 1.500q4 5.500 0 11" stroke="#888" />
          </svg>
          <svg width="17" height="13" viewBox="0 0 17 13" fill="none" stroke="#111">
            <path d="M1 0v3M5 0v3M.5 3h5v2Q3 7 .5 5zM3 6v5.500h12.500v-8H7" />
            <path d="M5.500 5.500h8.500v4.500H5.500zM15 5h2v5h-2z" fill="#111" stroke="none" />
          </svg>
          <svg width="14" height="14" viewBox="0 0 14 14" fill="none" stroke="#333">
            <path d="M.5 13.500Q1 2 13 1M4 13.500Q4.500 5 13 4.500M7 13.500Q8 8 13 8" />
            <circle cx="11.500" cy="12" r="1.500" fill="#111" stroke="none" />
          </svg>
        </div>
        <span className="w-[35px] shrink-0 text-[13px]">ENG</span>
        <div className="w-[66px] shrink-0 text-center text-[13px] leading-[19px]">
          <div>11:20</div>
          <div>2021/1/20</div>
        </div>
      </div>
    </div>
  );
}

export default function App() {
  return (
    <div className="flex h-screen flex-col overflow-hidden bg-[#e6e6e8] font-['Open_Sans','Noto_Sans_CJK_SC',sans-serif]">
      <TitleBar />
      <div className="flex h-[95px] shrink-0 border-t-4 border-b border-t-[#f0f5fb] border-b-[#cdcdcd] bg-[#f3f3f3] pb-px text-xs text-[#444]">
        <div className="flex w-[27px] shrink-0 flex-col justify-between overflow-hidden border-r border-[#c8c8c8] pt-12">
          <button className="-ml-3 w-6 text-right">式刷</button>
          <span className="flex h-[18px] items-center justify-end"><Launcher label="剪贴板设置" /></span>
        </div>
        <FontGroup />
        <ParagraphGroup />
        <StylesGroup />
        <EditingGroup />
      </div>
      <main className="min-h-0 flex-1 overflow-hidden pt-[27px] pr-[17px] font-['Open_Sans','Noto_Sans_CJK_SC',sans-serif] font-light">
        <Page />
      </main>
      <StatusBar />
      <TaskBar />
    </div>
  );
}
